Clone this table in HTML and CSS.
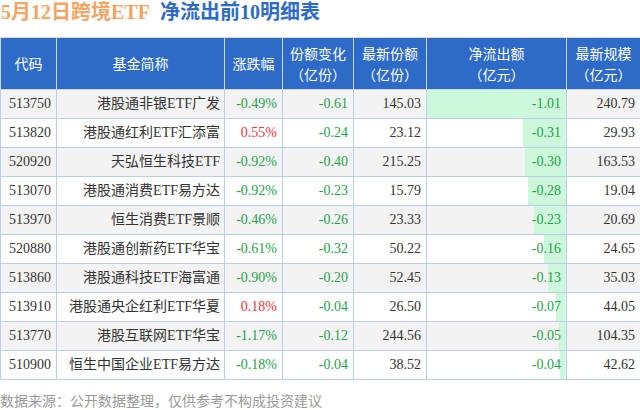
FILE: index.html
```html
<!DOCTYPE html>
<html lang="zh">
<head>
<meta charset="utf-8">
<link rel="stylesheet" href="styles.css">
</head>
<body>
<div class="page">
  <h1 class="title"><span class="t-orange">5月12日跨境ETF</span><span class="t-blue">净流出前10明细表</span></h1>
  <table class="grid">
    <colgroup>
      <col class="c1"><col class="c2"><col class="c3"><col class="c4"><col class="c5"><col class="c6"><col class="c7">
    </colgroup>
    <thead>
      <tr>
        <th>代码</th>
        <th>基金简称</th>
        <th>涨跌幅</th>
        <th>份额变化<br>（亿份）</th>
        <th>最新份额<br>（亿份）</th>
        <th>净流出额<br>（亿元）</th>
        <th>最新规模<br>（亿元）</th>
      </tr>
    </thead>
    <tbody>
      <tr><td>513750</td><td>港股通非银ETF广发</td><td class="dn">-0.49%</td><td class="dn">-0.61</td><td>145.03</td><td class="dn bar" style="background-size:100% 100%">-1.01</td><td>240.79</td></tr>
      <tr><td>513820</td><td>港股通红利ETF汇添富</td><td class="up">0.55%</td><td class="dn">-0.24</td><td>23.12</td><td class="dn bar" style="background-size:30.7% 100%">-0.31</td><td>29.93</td></tr>
      <tr><td>520920</td><td>天弘恒生科技ETF</td><td class="dn">-0.92%</td><td class="dn">-0.40</td><td>215.25</td><td class="dn bar" style="background-size:29.7% 100%">-0.30</td><td>163.53</td></tr>
      <tr><td>513070</td><td>港股通消费ETF易方达</td><td class="dn">-0.92%</td><td class="dn">-0.23</td><td>15.79</td><td class="dn bar" style="background-size:27.7% 100%">-0.28</td><td>19.04</td></tr>
      <tr><td>513970</td><td>恒生消费ETF景顺</td><td class="dn">-0.46%</td><td class="dn">-0.26</td><td>23.33</td><td class="dn bar" style="background-size:22.8% 100%">-0.23</td><td>20.69</td></tr>
      <tr><td>520880</td><td>港股通创新药ETF华宝</td><td class="dn">-0.61%</td><td class="dn">-0.32</td><td>50.22</td><td class="dn bar" style="background-size:15.8% 100%">-0.16</td><td>24.65</td></tr>
      <tr><td>513860</td><td>港股通科技ETF海富通</td><td class="dn">-0.90%</td><td class="dn">-0.20</td><td>52.45</td><td class="dn bar" style="background-size:12.9% 100%">-0.13</td><td>35.03</td></tr>
      <tr><td>513910</td><td>港股通央企红利ETF华夏</td><td class="up">0.18%</td><td class="dn">-0.04</td><td>26.50</td><td class="dn bar" style="background-size:6.9% 100%">-0.07</td><td>44.05</td></tr>
      <tr><td>513770</td><td>港股互联网ETF华宝</td><td class="dn">-1.17%</td><td class="dn">-0.12</td><td>244.56</td><td class="dn bar" style="background-size:5% 100%">-0.05</td><td>104.35</td></tr>
      <tr><td>510900</td><td>恒生中国企业ETF易方达</td><td class="dn">-0.18%</td><td class="dn">-0.04</td><td>38.52</td><td class="dn bar" style="background-size:4% 100%">-0.04</td><td>42.62</td></tr>
    </tbody>
  </table>
  <p class="source">数据来源：公开数据整理，仅供参考不构成投资建议</p>
</div>
</body>
</html>
```

FILE: styles.css
```css
html, body {
  margin: 0;
  padding: 0;
  background: #ffffff;
}
.page {
  position: relative;
  width: 640px;
  height: 410px;
  overflow: hidden;
  font-family: "Liberation Serif", "Noto Sans CJK SC", serif;
}
.title {
  margin: 0;
  height: 37px;
  padding: 0 0 0 1px;
  box-sizing: border-box;
  font-size: 20px;
  line-height: 25px;
  font-weight: bold;
  display: flex;
  gap: 10px;
}
.t-orange { color: #f5a463; }
.t-blue { color: #2e6bc7; }
.grid {
  width: 640px;
  border-collapse: collapse;
  table-layout: fixed;
  font-size: 14px;
  color: #333333;
}
.c1 { width: 56px; }
.c2 { width: 168px; }
.c3 { width: 58px; }
.c4 { width: 71px; }
.c5 { width: 73px; }
.c6 { width: 140px; }
.c7 { width: 74px; }
.grid thead tr {
  height: 52px;
}
.grid th {
  background: #2e6bc8;
  color: #ffffff;
  font-family: "Noto Sans CJK SC", sans-serif;
  font-weight: normal;
  font-size: 14px;
  line-height: 21px;
  border: 1px solid #c9d9ec;
  border-top-color: #d8d8d8;
  padding: 0;
  text-align: center;
  white-space: nowrap;
}
.grid tbody tr {
  height: 29px;
}
.grid tbody tr:nth-child(odd) {
  background: #f3f3f3;
}
.grid td {
  border: 1px solid #b7cfe8;
  padding: 0 5px 0 0;
  text-align: right;
  white-space: nowrap;
  line-height: 20px;
}
.grid td:nth-child(2) {
  padding-right: 4px;
}
.dn { color: #1fa24a; }
.up { color: #f2323c; }
.bar {
  background-image: linear-gradient(#cdf7da, #cdf7da);
  background-repeat: no-repeat;
  background-position: right top;
}
.source {
  margin: 11px 0 0 0;
  font-family: "Noto Sans CJK SC", sans-serif;
  font-size: 14px;
  color: #9a9a9a;
  line-height: 18px;
  white-space: nowrap;
}
```
